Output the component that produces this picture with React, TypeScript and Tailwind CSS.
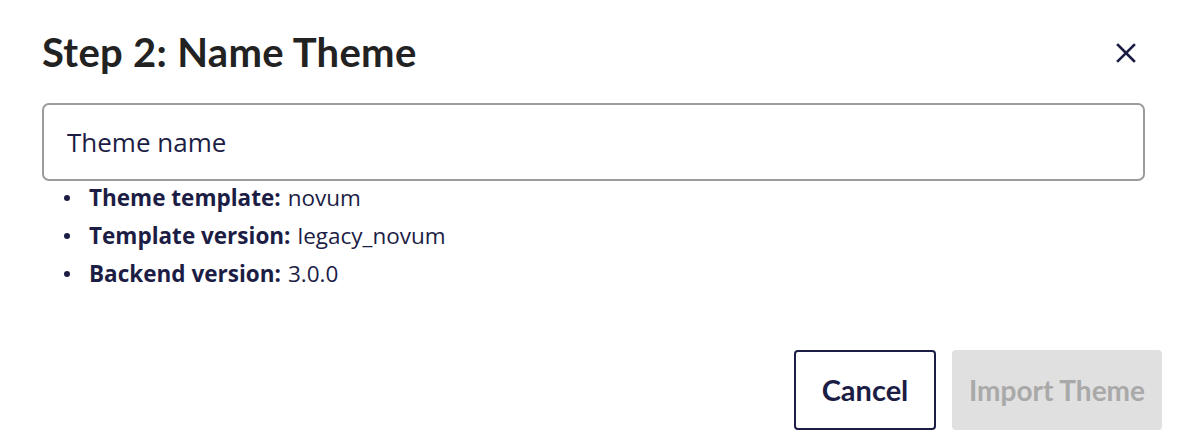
const details = [
  { label: 'Theme template:', value: 'novum' },
  { label: 'Template version:', value: 'legacy_novum' },
  { label: 'Backend version:', value: '3.0.0' },
]

export default function App() {
  return (
    <div className="w-[1182px] h-[446px] bg-white font-['Open_Sans',sans-serif] text-[#1c1d45]">
      <div className="flex flex-col pl-[42px] pr-[37px] pt-[26px]">
        {/* Header */}
        <div className="flex items-center justify-between h-[52px]">
          <h1 className="font-['Lato',sans-serif] text-[40px] font-bold text-[#222222] tracking-[0.3px]">
            Step 2: Name Theme
          </h1>
          <button className="mr-[9px] mt-[2px] text-[#1c1d45]">
            <svg width="20" height="20" viewBox="0 0 20 20" fill="none" stroke="currentColor" strokeWidth="2.6" strokeLinecap="square">
              <path d="M2 2L18 18M18 2L2 18" />
            </svg>
          </button>
        </div>

        {/* Name input */}
        <input
          className="mt-[25px] h-[78px] w-[1103px] rounded-[7px] border-2 border-[#9c9c9c] px-[23px] text-[26px] text-[#1c1d45] placeholder:text-[#1c1d45] outline-none"
          placeholder="Theme name"
        />

        {/* Details */}
        <ul className="mt-[-2px] pl-[22px] text-[22.5px] leading-[38px]">
          {details.map((d) => (
            <li key={d.label} className="flex items-center">
              <span className="mr-[19px] h-[6px] w-[6px] rounded-full bg-[#1c1d45]" />
              <span className="font-bold">{d.label}</span>
              <span className="ml-[7px]">{d.value}</span>
            </li>
          ))}
        </ul>

        {/* Actions */}
        <div className="mt-[57px] flex justify-end gap-[16px] mr-[-17px]">
          <button className="h-[80px] w-[142px] rounded-[4px] border-2 border-[#1c1d45] font-['Lato',sans-serif] text-[29px] font-bold text-[#1c1d45]">
            Cancel
          </button>
          <button className="h-[80px] w-[210px] rounded-[4px] bg-[#e0e0e0] font-['Lato',sans-serif] text-[28px] font-bold text-[#a9a9a9]">
            Import Theme
          </button>
        </div>
      </div>
    </div>
  )
}
